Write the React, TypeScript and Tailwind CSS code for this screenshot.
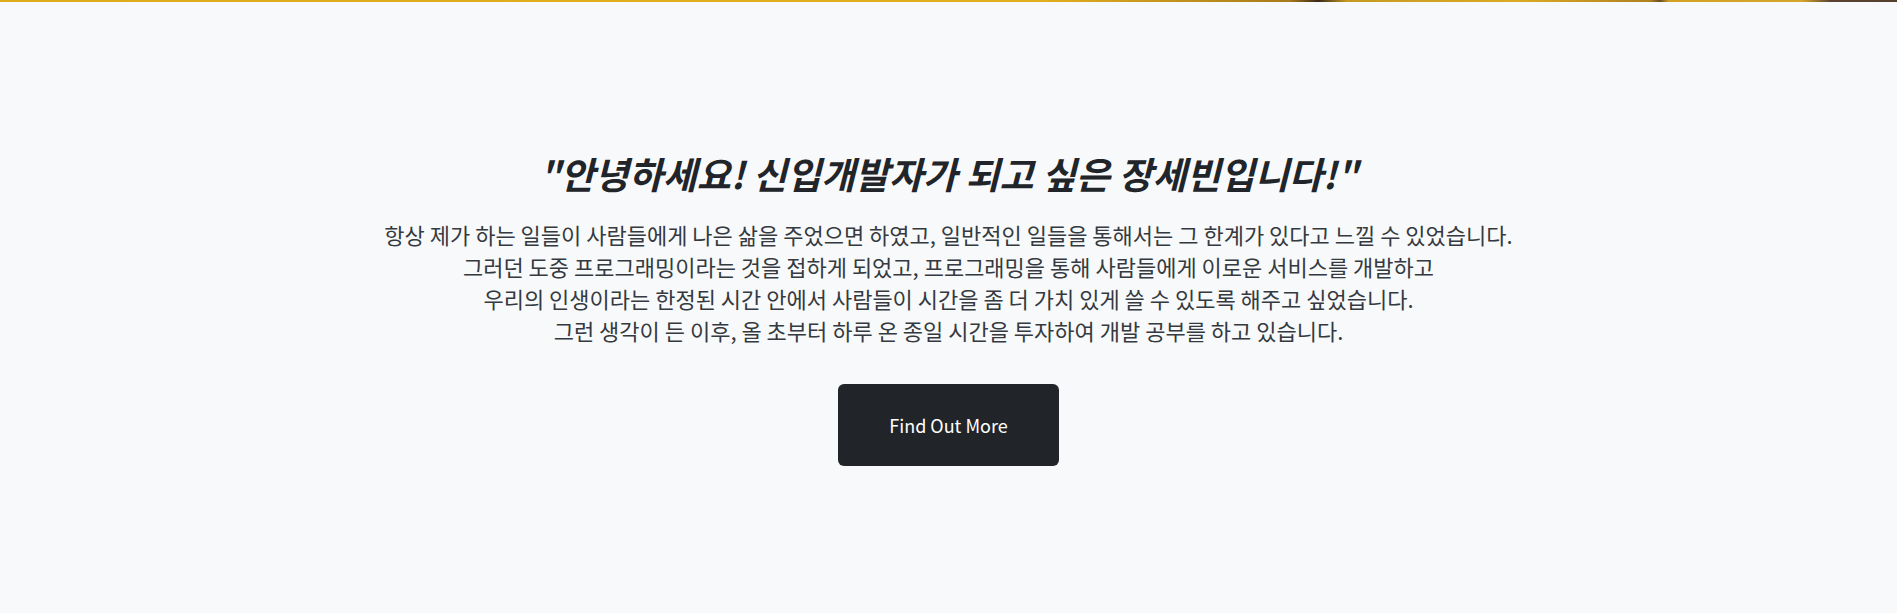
import React from "react";

const kr = { fontFamily: '"Noto Sans CJK KR", "Noto Sans", sans-serif' };

export default function App() {
  return (
    <div
      className="w-full h-[613px] bg-[#f8f9fa] flex flex-col text-[#212529]"
      style={kr}
    >
      <div className="h-[2px] w-full bg-[linear-gradient(90deg,#dfac1c_0%,#e2ae1e_55%,#a87a1a_68%,#3a2a18_69.5%,#c79a22_71%,#dcaa22_80%,#b08020_87%,#6a4e25_87.5%,#d4a222_88%,#d5a62a_95%,#5a4330_96.5%,#54402e_100%)]" />
      <div className="flex flex-col items-center pt-[149px]">
        <h2 className="text-[37px] leading-[1.2] font-bold italic">
          "안녕하세요! 신입개발자가 되고 싶은 장세빈입니다!"
        </h2>
        <p className="mt-[23px] text-[22px] leading-[32px] text-center text-[#343a40]">
          항상 제가 하는 일들이 사람들에게 나은 삶을 주었으면 하였고, 일반적인 일들을 통해서는 그 한계가 있다고 느낄 수 있었습니다.
          <br />
          그러던 도중 프로그래밍이라는 것을 접하게 되었고, 프로그래밍을 통해 사람들에게 이로운 서비스를 개발하고
          <br />
          우리의 인생이라는 한정된 시간 안에서 사람들이 시간을 좀 더 가치 있게 쓸 수 있도록 해주고 싶었습니다.
          <br />
          그런 생각이 든 이후, 올 초부터 하루 온 종일 시간을 투자하여 개발 공부를 하고 있습니다.
        </p>
        <button className="mt-[38px] w-[221px] h-[82px] rounded-[6px] bg-[#212529] text-white text-[18px] flex items-center justify-center">
          Find Out More
        </button>
      </div>
    </div>
  );
}
